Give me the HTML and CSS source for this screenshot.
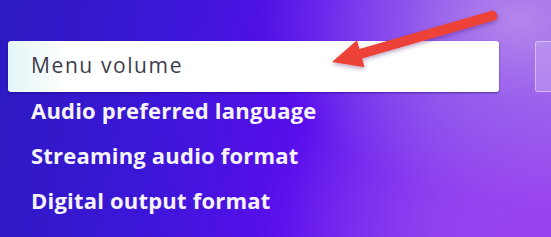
FILE: index.html
```html
<!doctype html>
<html>
<head>
<title>Audio settings</title>
<link rel="stylesheet" href="styles.css">
</head>
<body>
<main class="screen">
  <section class="top-row">
    <div class="option selected">Menu volume</div>
    <div class="option ghost"></div>
  </section>
  <ul class="menu">
    <li>Audio preferred language</li>
    <li>Streaming audio format</li>
    <li>Digital output format</li>
  </ul>
  <svg class="arrow" width="551" height="100" viewBox="0 0 551 100">
    <defs>
      <filter id="shade" x="-10%" y="-30%" width="120%" height="160%">
        <feDropShadow dx="0" dy="2" stdDeviation="2" flood-color="#300060" flood-opacity="0.35"/>
      </filter>
    </defs>
    <path d="M493.6 10.2 L359.4 48.95 L357 40.3 L332 62 L364.6 67.2 L362.2 58.55 L496.4 19.8 Q499 14 493.6 10.2 Z" fill="#ec4238" filter="url(#shade)"/>
  </svg>
</main>
</body>
</html>
```

FILE: styles.css
```css
html, body {
	margin : 0;
	height : 100%;
}
.screen {
	position : relative;
	width : 551px;
	height : 237px;
	overflow : hidden;
	background :
		radial-gradient(ellipse 260px 180px at 520px 20px, #b486ec 0%, rgba(160,110,235,0.6) 45%, rgba(140,80,230,0) 100%),
		radial-gradient(ellipse 300px 200px at 560px 230px, #9a40f0 0%, rgba(150,60,240,0) 100%),
		linear-gradient(100deg, #2c1ac0 0%, #3c16d8 30%, #5a0eec 55%, #8040ee 80%, #9a60ec 100%);
	font-family : "Open Sans", "Liberation Sans", sans-serif;
}
.top-row {
	display : flex;
	gap : 36px;
	padding : 41px 0 0 8px;
}
.option {
	height : 51px;
	border-radius : 3px;
	flex-shrink : 0;
}
.selected {
	width : 491px;
	background : linear-gradient(90deg, #e4f6f6 0%, #ffffff 12%, #ffffff 100%);
	color : #3c3c4a;
	font-size : 21px;
	letter-spacing : 1.6px;
	padding-left : 23px;
	box-sizing : border-box;
	line-height : 49px;
	font-weight : 400;
	box-shadow : 0 1px 2px rgba(20,0,90,0.5);
}
.ghost {
	width : 80px;
	background : rgba(200,170,245,0.45);
	border : 1px solid rgba(230,210,255,0.7);
	box-sizing : border-box;
}
.menu {
	list-style : none;
	margin : 0;
	padding : 0 0 0 31px;
	color : #f6f4ff;
	font-size : 22px;
	font-weight : 700;
	letter-spacing : 0.2px;
}
.menu li {
	height : 45px;
	line-height : 36px;
}
.arrow {
	position : absolute;
	left : 0;
	top : 0;
}
```
